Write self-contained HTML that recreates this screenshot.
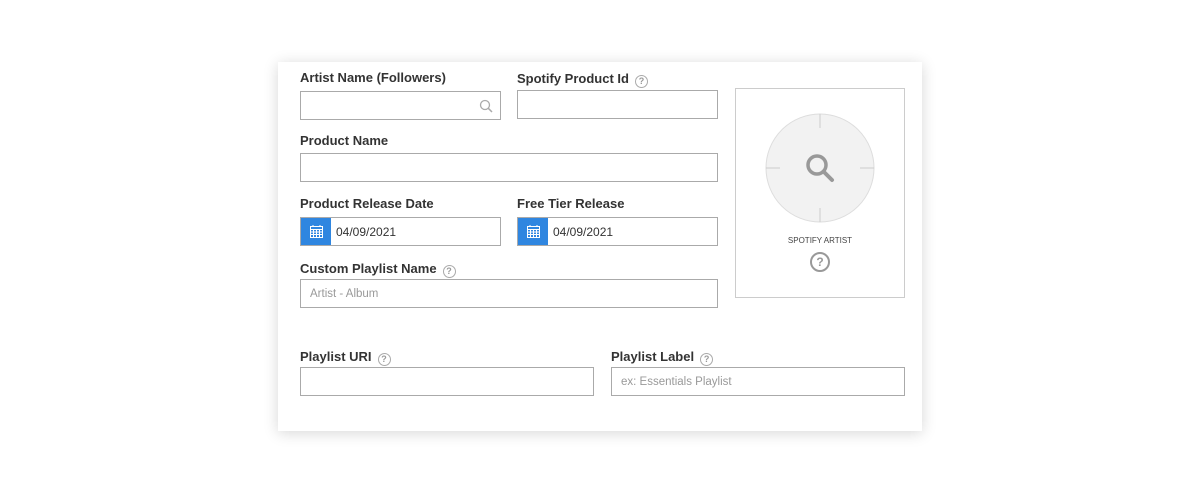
<!DOCTYPE html>
<html><head><style>
*{box-sizing:border-box;margin:0;padding:0}
body{width:1200px;height:493px;background:#fff;position:relative;font-family:"Liberation Sans",sans-serif;overflow:hidden}
.card{position:absolute;left:278px;top:62px;width:644px;height:369px;background:#fff;box-shadow:0 2px 14px rgba(0,0,0,0.16)}
.l{position:absolute;font-size:13px;font-weight:bold;color:#333}
.i{position:absolute;border:1px solid #aaa;background:#fff;height:29px}
.q{display:inline-block;width:13px;height:13px;border:1px solid #aaa;border-radius:50%;font-size:9px;color:#999;text-align:center;line-height:11px;font-weight:bold;margin-left:6px;vertical-align:-1px}
.ph{position:absolute;left:9px;top:8px;font-size:11.5px;color:#999}
.cal{position:absolute;left:0;top:0;width:30px;height:27px;background:#2f86e0}
.dt{position:absolute;left:35px;top:7px;font-size:12px;color:#333}
</style></head><body>
<div class="card"></div>
<div class="l" style="left:300px;top:70px">Artist Name (Followers)</div>
<div class="l" style="left:517px;top:71px">Spotify Product Id<span class="q">?</span></div>
<div class="i" style="left:300px;top:91px;width:201px">
<svg style="position:absolute;right:7px;top:7px" width="14" height="14" viewBox="0 0 14 14"><circle cx="6" cy="6" r="4.5" fill="none" stroke="#aaa" stroke-width="1.3"/><path d="M9.3 9.3L13 13" stroke="#aaa" stroke-width="1.5"/></svg></div>
<div class="i" style="left:517px;top:90px;width:201px"></div>
<div class="l" style="left:300px;top:133px">Product Name</div>
<div class="i" style="left:300px;top:153px;width:418px"></div>
<div class="l" style="left:300px;top:196px">Product Release Date</div>
<div class="l" style="left:517px;top:196px">Free Tier Release</div>
<div class="i" style="left:300px;top:217px;width:201px"><div class="cal"><svg style="position:absolute;left:9px;top:7px" width="13" height="13" viewBox="0 0 13 13"><rect x="0.5" y="1.5" width="12" height="11" fill="none" stroke="#fff"/><path d="M0.5 4.5H12.5M0.5 7H12.5M0.5 9.5H12.5M3.5 4.5V12.5M6.5 4.5V12.5M9.5 4.5V12.5M3 0V2M10 0V2" stroke="#fff"/></svg></div><div class="dt">04/09/2021</div></div>
<div class="i" style="left:517px;top:217px;width:201px"><div class="cal"><svg style="position:absolute;left:9px;top:7px" width="13" height="13" viewBox="0 0 13 13"><rect x="0.5" y="1.5" width="12" height="11" fill="none" stroke="#fff"/><path d="M0.5 4.5H12.5M0.5 7H12.5M0.5 9.5H12.5M3.5 4.5V12.5M6.5 4.5V12.5M9.5 4.5V12.5M3 0V2M10 0V2" stroke="#fff"/></svg></div><div class="dt">04/09/2021</div></div>
<div class="l" style="left:300px;top:261px">Custom Playlist Name<span class="q">?</span></div>
<div class="i" style="left:300px;top:279px;width:418px"><div class="ph">Artist - Album</div></div>
<div class="l" style="left:300px;top:349px">Playlist URI<span class="q">?</span></div>
<div class="l" style="left:611px;top:349px">Playlist Label<span class="q">?</span></div>
<div class="i" style="left:300px;top:367px;width:294px"></div>
<div class="i" style="left:611px;top:367px;width:294px"><div class="ph">ex: Essentials Playlist</div></div>
<div style="position:absolute;left:735px;top:88px;width:170px;height:210px;border:1px solid #ccc"></div>
<svg style="position:absolute;left:765px;top:113px" width="110" height="110" viewBox="0 0 110 110"><circle cx="55" cy="55" r="54" fill="#f2f2f2" stroke="#ddd"/><path d="M55 1V15M55 95V109M1 55H15M95 55H109" stroke="#ccc"/><circle cx="52" cy="52" r="9" fill="none" stroke="#999" stroke-width="3.5"/><path d="M58.5 58.5L67 67" stroke="#999" stroke-width="4" stroke-linecap="round"/></svg>
<div style="position:absolute;left:735px;top:236px;width:170px;text-align:center;font-size:8px;color:#444">SPOTIFY ARTIST</div>
<div style="position:absolute;left:810px;top:252px;width:20px;height:20px;border:2px solid #999;border-radius:50%;text-align:center;font-size:12px;line-height:16px;color:#999;font-weight:bold">?</div>
</body></html>
